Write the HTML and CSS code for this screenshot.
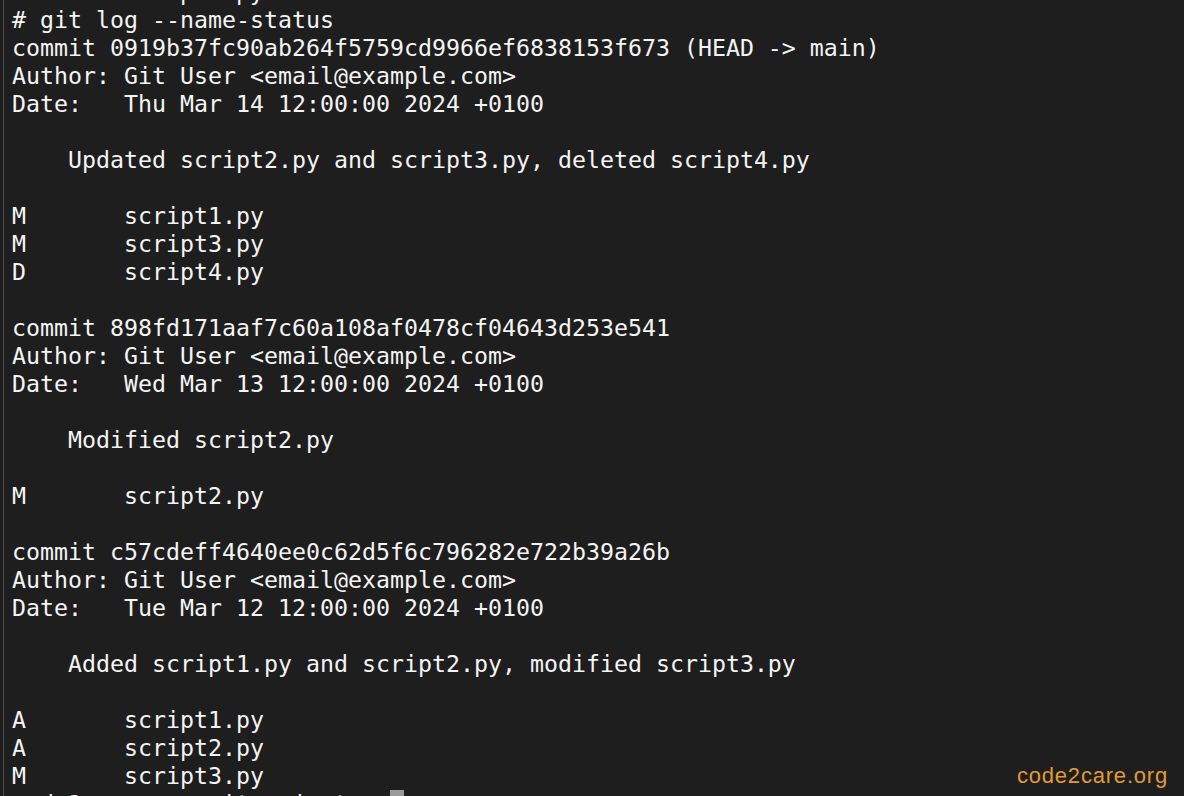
FILE: index.html
```html
<!DOCTYPE html>
<html lang="en">
<head>
<meta charset="utf-8">
<title>git log --name-status</title>
<link rel="stylesheet" href="styles.css">
</head>
<body>
<div class="window">
  <div class="edge"></div>
  <pre class="term"><span class="line">M       script3.py</span>
<span class="line"># git log --name-status</span>
<span class="line">commit 0919b37fc90ab264f5759cd9966ef6838153f673 (HEAD -&gt; main)</span>
<span class="line">Author: Git User &lt;email@example.com&gt;</span>
<span class="line">Date:   Thu Mar 14 12:00:00 2024 +0100</span>

<span class="line">    Updated script2.py and script3.py, deleted script4.py</span>

<span class="line">M       script1.py</span>
<span class="line">M       script3.py</span>
<span class="line">D       script4.py</span>

<span class="line">commit 898fd171aaf7c60a108af0478cf04643d253e541</span>
<span class="line">Author: Git User &lt;email@example.com&gt;</span>
<span class="line">Date:   Wed Mar 13 12:00:00 2024 +0100</span>

<span class="line">    Modified script2.py</span>

<span class="line">M       script2.py</span>

<span class="line">commit c57cdeff4640ee0c62d5f6c796282e722b39a26b</span>
<span class="line">Author: Git User &lt;email@example.com&gt;</span>
<span class="line">Date:   Tue Mar 12 12:00:00 2024 +0100</span>

<span class="line">    Added script1.py and script2.py, modified script3.py</span>

<span class="line">A       script1.py</span>
<span class="line">A       script2.py</span>
<span class="line">M       script3.py</span>
<span class="line">code2care@mac gitproject % <span class="cursor"> </span></span></pre>
  <div class="watermark">code2care.org</div>
</div>
</body>
</html>
```

FILE: styles.css
```css
html, body {
  margin: 0;
  padding: 0;
  background: #1e1e1e;
  height: 796px;
  overflow: hidden;
}

.window {
  position: relative;
  display: flex;
  height: 796px;
  overflow: hidden;
  background: #1e1e1e;
}

.edge {
  flex: 0 0 1px;
  margin-left: 3px;
  background: #4e4e4e;
}

.term {
  margin: -22px 0 0 0;
  padding: 0 0 0 8px;
  font-family: "DejaVu Sans Mono", "Liberation Mono", monospace;
  font-size: 23.25px;
  line-height: 28px;
  color: #f4f4f4;
  white-space: pre;
}

.cursor {
  background: #9a9a9a;
}

.watermark {
  position: absolute;
  right: 16px;
  bottom: 8px;
  font-family: "Liberation Sans", Arial, sans-serif;
  font-size: 22px;
  letter-spacing: 0.8px;
  line-height: 24px;
  color: #e09a38;
}
```
